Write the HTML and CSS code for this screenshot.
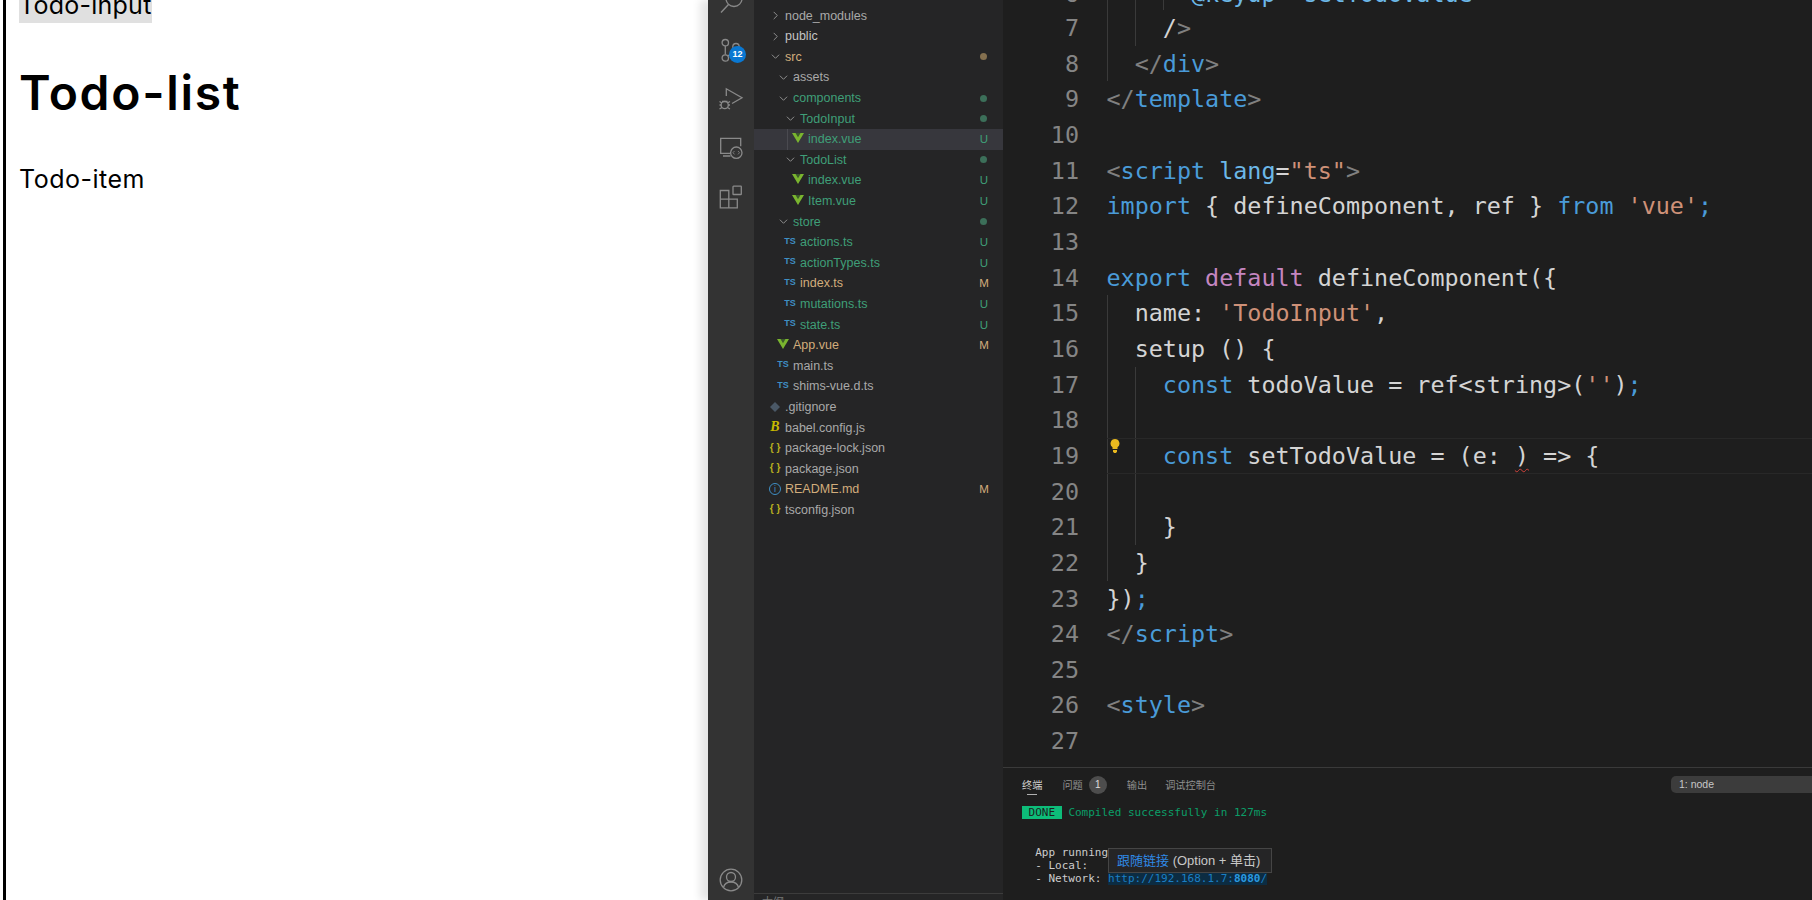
FILE: index.html
```html
<!DOCTYPE html>
<html>
<head>
  <title>Todo-list</title>
  <meta name="viewport" content="width=device-width, initial-scale=1.0">
  <link rel="stylesheet" href="styles.css">
</head>
<body>
  <section class="browser">
    <div class="todo-input"><span>Todo-input</span></div>
    <h1>Todo-list</h1>
    <p>Todo-item</p>
  </section>

  <nav class="activity">
    <div class="slot slot-search">
      <svg class="icon" viewBox="0 0 24 24"><circle cx="15" cy="14.5" r="8"/><path d="M9.5 20.5 2 28.5"/></svg>
    </div>
    <div class="slot">
      <svg class="icon" viewBox="0 0 24 24"><circle cx="6.3" cy="8.7" r="3.2"/><circle cx="6.3" cy="24" r="3.2"/><circle cx="17" cy="12.7" r="3.2"/><path d="M6.3 12v8.6M17 16c0 4-7.5 3-7.6 6"/></svg>
      <span class="badge">12</span>
    </div>
    <div class="slot">
      <svg class="icon" viewBox="0 0 24 24"><path d="M7.3 11V3.8L23 12.8 13 18.5"/><circle cx="5.7" cy="20" r="3.6"/><path d="M.5 16.5l2.5 1.5M.5 20h1.6M.5 24l2.5-1.5M11 16.5 8.500 18M11 20H9.300M11 24l-2.500-1.500M3 16.500h5.500"/></svg>
    </div>
    <div class="slot">
      <svg class="icon" viewBox="0 0 24 24"><path d="M11 18.300H1.700V3.300h20v8M4 21h7.500"/><circle cx="17.300" cy="17.700" r="5.700"/><path d="M15.500 16l-1.500 1.700 1.500 1.700M19 16l1.500 1.700L19 19.400" class="thin"/></svg>
    </div>
    <div class="slot">
      <svg class="icon" viewBox="0 0 24 24"><rect x="14" y=".2" width="8.300" height="8.300" rx=".6"/><path d="M1.300 4.500H9.800V21.800H1.300ZM1.300 13.200H18.300V21.800H9.800"/></svg>
    </div>
    <div class="slot slot-account">
      <svg class="icon" viewBox="0 0 24 24"><circle cx="12" cy="12" r="10.800"/><circle cx="12" cy="9" r="4.500"/><path d="M4.500 19.500c1-4 4-5.500 7.500-5.500s6.500 1.500 7.500 5.500"/></svg>
    </div>
  </nav>

  <aside class="sidebar">
    <div class="tree">
      <div class="row d0 plain"><span class="slot-ico"><svg class="chev" viewBox="0 0 10 10"><path d="M3 1l4 4-4 4"/></svg></span><span class="name">node_modules</span></div>
      <div class="row d0 plain bright"><span class="slot-ico"><svg class="chev" viewBox="0 0 10 10"><path d="M3 1l4 4-4 4"/></svg></span><span class="name">public</span></div>
      <div class="row d0 mod"><span class="slot-ico"><svg class="chev" viewBox="0 0 10 10"><path d="M1 3l4 4 4-4"/></svg></span><span class="name">src</span><span class="dot dot-mod"></span></div>
      <div class="row d1 plain"><span class="slot-ico"><svg class="chev" viewBox="0 0 10 10"><path d="M1 3l4 4 4-4"/></svg></span><span class="name">assets</span></div>
      <div class="row d1 new"><span class="slot-ico"><svg class="chev" viewBox="0 0 10 10"><path d="M1 3l4 4 4-4"/></svg></span><span class="name">components</span><span class="dot"></span></div>
      <div class="row d2 new"><span class="slot-ico"><svg class="chev" viewBox="0 0 10 10"><path d="M1 3l4 4 4-4"/></svg></span><span class="name">TodoInput</span><span class="dot"></span></div>
      <div class="row d3 new selected"><span class="slot-ico"><svg class="vue" viewBox="0 0 12 10"><path d="M0 0h12L6 10Z"/><path class="vue-in" d="M3.500 0h5L6 4.200Z"/></svg></span><span class="name">index.vue</span><span class="status">U</span></div>
      <div class="row d2 new"><span class="slot-ico"><svg class="chev" viewBox="0 0 10 10"><path d="M1 3l4 4 4-4"/></svg></span><span class="name">TodoList</span><span class="dot"></span></div>
      <div class="row d3 new"><span class="slot-ico"><svg class="vue" viewBox="0 0 12 10"><path d="M0 0h12L6 10Z"/><path class="vue-in" d="M3.500 0h5L6 4.200Z"/></svg></span><span class="name">index.vue</span><span class="status">U</span></div>
      <div class="row d3 new"><span class="slot-ico"><svg class="vue" viewBox="0 0 12 10"><path d="M0 0h12L6 10Z"/><path class="vue-in" d="M3.500 0h5L6 4.200Z"/></svg></span><span class="name">Item.vue</span><span class="status">U</span></div>
      <div class="row d1 new"><span class="slot-ico"><svg class="chev" viewBox="0 0 10 10"><path d="M1 3l4 4 4-4"/></svg></span><span class="name">store</span><span class="dot"></span></div>
      <div class="row d2 new"><span class="slot-ico ts">TS</span><span class="name">actions.ts</span><span class="status">U</span></div>
      <div class="row d2 new"><span class="slot-ico ts">TS</span><span class="name">actionTypes.ts</span><span class="status">U</span></div>
      <div class="row d2 mod"><span class="slot-ico ts">TS</span><span class="name">index.ts</span><span class="status">M</span></div>
      <div class="row d2 new"><span class="slot-ico ts">TS</span><span class="name">mutations.ts</span><span class="status">U</span></div>
      <div class="row d2 new"><span class="slot-ico ts">TS</span><span class="name">state.ts</span><span class="status">U</span></div>
      <div class="row d1 mod"><span class="slot-ico"><svg class="vue" viewBox="0 0 12 10"><path d="M0 0h12L6 10Z"/><path class="vue-in" d="M3.500 0h5L6 4.200Z"/></svg></span><span class="name">App.vue</span><span class="status">M</span></div>
      <div class="row d1 plain"><span class="slot-ico ts">TS</span><span class="name">main.ts</span></div>
      <div class="row d1 plain"><span class="slot-ico ts">TS</span><span class="name">shims-vue.d.ts</span></div>
      <div class="row d0 plain"><span class="slot-ico"><svg class="diamond" viewBox="0 0 10 10"><path d="M5 0l5 5-5 5-5-5Z"/></svg></span><span class="name">.gitignore</span></div>
      <div class="row d0 plain"><span class="slot-ico babel">B</span><span class="name">babel.config.js</span></div>
      <div class="row d0 plain"><span class="slot-ico json">{ }</span><span class="name">package-lock.json</span></div>
      <div class="row d0 plain"><span class="slot-ico json">{ }</span><span class="name">package.json</span></div>
      <div class="row d0 mod"><span class="slot-ico info">i</span><span class="name">README.md</span><span class="status">M</span></div>
      <div class="row d0 plain"><span class="slot-ico json">{ }</span><span class="name">tsconfig.json</span></div>
    </div>
    <div class="outline">大纲</div>
  </aside>

  <main class="workbench">
    <div class="editor">
      <div class="line"><span class="ln">6</span><span class="ind"></span><span class="ind"></span><span class="ind"></span><span class="tag">@keyup</span><span class="pun">=</span><span class="str">"</span><span class="tag">setTodoValue</span><span class="str">"</span></div>
      <div class="line"><span class="ln">7</span><span class="ind"></span><span class="ind"></span><span class="txt">/</span><span class="pun">&gt;</span></div>
      <div class="line"><span class="ln">8</span><span class="ind"></span><span class="pun">&lt;/</span><span class="kw">div</span><span class="pun">&gt;</span></div>
      <div class="line"><span class="ln">9</span><span class="pun">&lt;/</span><span class="kw">template</span><span class="pun">&gt;</span></div>
      <div class="line"><span class="ln">10</span></div>
      <div class="line"><span class="ln">11</span><span class="pun">&lt;</span><span class="kw">script </span><span class="tag">lang</span><span class="txt">=</span><span class="str">"ts"</span><span class="pun">&gt;</span></div>
      <div class="line"><span class="ln">12</span><span class="kw">import</span><span class="txt"> { defineComponent, ref } </span><span class="kw">from </span><span class="str">'vue'</span><span class="kw">;</span></div>
      <div class="line"><span class="ln">13</span></div>
      <div class="line"><span class="ln">14</span><span class="kw">export </span><span class="ctl">default</span><span class="txt"> defineComponent({</span></div>
      <div class="line"><span class="ln">15</span><span class="ind"></span><span class="txt">name: </span><span class="str">'TodoInput'</span><span class="txt">,</span></div>
      <div class="line"><span class="ln">16</span><span class="ind"></span><span class="txt">setup () {</span></div>
      <div class="line"><span class="ln">17</span><span class="ind"></span><span class="ind"></span><span class="kw">const</span><span class="txt"> todoValue = ref&lt;string&gt;(</span><span class="str">''</span><span class="txt">)</span><span class="kw">;</span></div>
      <div class="line"><span class="ln">18</span><span class="ind"></span><span class="ind"></span></div>
      <div class="line current"><span class="ln">19</span><span class="ind"></span><span class="ind"></span><span class="kw">const</span><span class="txt"> setTodoValue = (e: </span><span class="txt squiggle">)</span><span class="txt"> =&gt; {</span>
        <svg class="bulb" viewBox="0 0 10 14"><path d="M5 0a4.500 4.500 0 0 0-2.500 8.200V10h5V8.200A4.500 4.500 0 0 0 5 0Z"/><path d="M3 11h4v1.500L6 14H4l-1-1.500Z"/></svg>
      </div>
      <div class="line"><span class="ln">20</span><span class="ind"></span><span class="ind"></span></div>
      <div class="line"><span class="ln">21</span><span class="ind"></span><span class="ind"></span><span class="txt">}</span></div>
      <div class="line"><span class="ln">22</span><span class="ind"></span><span class="txt">}</span></div>
      <div class="line"><span class="ln">23</span><span class="txt">})</span><span class="kw">;</span></div>
      <div class="line"><span class="ln">24</span><span class="pun">&lt;/</span><span class="kw">script</span><span class="pun">&gt;</span></div>
      <div class="line"><span class="ln">25</span></div>
      <div class="line"><span class="ln">26</span><span class="pun">&lt;</span><span class="kw">style</span><span class="pun">&gt;</span></div>
      <div class="line"><span class="ln">27</span></div>
    </div>

    <div class="terminal">
      <div class="tabs">
        <span class="tab active">终端</span>
        <span class="tab">问题<span class="count">1</span></span>
        <span class="tab">输出</span>
        <span class="tab tab-debug">调试控制台</span>
        <span class="picker">1: node</span>
      </div>
      <div class="term-line"><span class="done"> DONE </span> <span class="ok">Compiled successfully in 127ms</span></div>
      <div class="term-line"></div>
      <div class="term-line"></div>
      <div class="term-line">  App running</div>
      <div class="term-line">  - Local:</div>
      <div class="term-line">  - Network: <span class="link">http://192.168.1.7:<b>8080</b>/</span></div>
      <div class="tooltip"><span class="tip-link">跟随链接</span> (Option + 单击)</div>
    </div>
  </main>
</body>
</html>
```

FILE: styles.css
```css
html, body {
  height: 100%;
  margin: 0;
  padding: 0;
  overflow: hidden;
}
body {
  display: flex;
  width: 1812px;
  height: 900px;
  background: #fff;
  font-family: "Liberation Sans", "Noto Sans CJK SC", sans-serif;
}

/* browser preview on the left */
.browser {
  width: 705px;
  margin-left: 3px;
  padding-left: 13px;
  box-sizing: border-box;
  border-left: 3px solid #000;
  background: #fff;
  color: #000;
  font-family: Inter, "Liberation Sans", sans-serif;
}
.todo-input {
  margin-top: -10px;
  font-size: 25px;
  line-height: 30px;
  letter-spacing: .25px;
}
.todo-input span {
  display: inline-block;
  padding-bottom: 3px;
  background: #e0e0e0;
}
.browser h1 {
  margin: 39.500px 0 0;
  font-size: 48px;
  line-height: 60px;
  font-weight: 600;
  letter-spacing: 1.700px;
}
.browser p {
  margin: 41.500px 0 0;
  font-size: 25px;
  line-height: 30px;
  letter-spacing: .5px;
}

/* activity bar */
.activity {
  position: relative;
  width: 46px;
  flex: none;
  display: flex;
  flex-direction: column;
  background: #333;
  box-shadow: -8px 0 8px rgba(0, 0, 0, .1);
}
.slot {
  position: relative;
  height: 50.5px;
  flex: none;
  display: flex;
  align-items: center;
  justify-content: center;
}
.slot-search {
  margin-top: -29.700px;
}
.slot-account {
  margin-top: auto;
  margin-bottom: -5px;
}
.icon {
  width: 24px;
  height: 24px;
  overflow: visible;
  fill: none;
  stroke: #8a8a8a;
  stroke-width: 1.300;
}
.activity .thin {
  stroke-width: .8;
}
.activity .icon circle {
  fill: #333;
}
.badge {
  position: absolute;
  left: 21px;
  top: 25px;
  width: 17px;
  height: 17px;
  border-radius: 50%;
  background: #0a78d2;
  color: #fff;
  font-size: 9px;
  font-weight: bold;
  line-height: 17px;
  text-align: center;
}

/* explorer */
.sidebar {
  width: 249px;
  flex: none;
  display: flex;
  flex-direction: column;
  background: #252526;
  font-size: 12.500px;
}
.tree {
  padding-top: 5.400px;
}
.row {
  display: flex;
  align-items: center;
  height: 20.600px;
}
.d0 { padding-left: 13px; }
.d1 { padding-left: 21px; }
.d2 { padding-left: 28px; }
.d3 { padding-left: 36px; }
.plain { color: #a9a9a9; }
.bright { color: #c4c4c4; }
.new { color: #3f9f78; }
.mod { color: #d2ad7c; }
.selected {
  background: linear-gradient(#4a4a50, #4a4a50) 33px 0 / 1px 100% no-repeat, #37373d;
}
.slot-ico {
  width: 16px;
  margin-right: 2px;
  flex: none;
  display: flex;
  align-items: center;
  justify-content: center;
}
.chev {
  width: 9px;
  height: 9px;
  fill: none;
  stroke: #9a9a9a;
  stroke-width: 1;
}
.vue {
  width: 12px;
  height: 10px;
  margin-top: -3px;
  fill: #7ab52f;
}
.vue .vue-in {
  fill: #3b5a2a;
}
.diamond {
  width: 10px;
  height: 10px;
  fill: #4a5866;
}
.ts {
  color: #3f8fc4;
  font-size: 9px;
  font-weight: bold;
  margin-top: -3px;
}
.babel {
  color: #c8b800;
  font-family: "Liberation Serif", serif;
  font-style: italic;
  font-weight: bold;
  font-size: 14px;
  margin-top: -1px;
}
.json {
  color: #b8b020;
  font-size: 10px;
  font-weight: bold;
  margin-top: -2px;
}
.info {
  box-sizing: border-box;
  width: 12px;
  height: 12px;
  margin: 0 4px 0 2px;
  border: 1px solid #3f8fc4;
  border-radius: 50%;
  color: #3f8fc4;
  font-size: 9px;
}
.status {
  width: 12px;
  margin: 0 13px 0 auto;
  text-align: center;
  font-size: 11.500px;
}
.dot {
  width: 7px;
  height: 7px;
  margin: 0 16.500px 0 auto;
  border-radius: 50%;
  background: #3c6f59;
}
.dot-mod {
  background: #84704f;
}
.outline {
  margin-top: auto;
  height: 6px;
  padding-left: 8px;
  overflow: hidden;
  border-top: 1px solid #3c3c3c;
  color: #777;
  font-size: 11px;
  line-height: 16px;
}

/* editor */
.workbench {
  width: 809px;
  flex: none;
  display: flex;
  flex-direction: column;
  background: #1e1e1e;
}
.editor {
  height: 767px;
  flex: none;
  overflow: hidden;
  font-family: "DejaVu Sans Mono", monospace;
  font-size: 23.400px;
  color: #d4d4d4;
}
.line {
  position: relative;
  display: flex;
  height: 35.670px;
  line-height: 37.670px;
  white-space: pre;
  box-sizing: border-box;
}
.line:first-child {
  margin-top: -25.670px;
  line-height: 41px;
}
.ln {
  width: 76px;
  margin-right: 27.500px;
  flex: none;
  text-align: right;
  color: #858585;
}
.ind {
  width: 28.160px;
  height: 100%;
  flex: none;
  box-sizing: border-box;
  border-left: 1px solid #3a3a3a;
}
.kw { color: #4a9bd8; }
.tag { color: #6cb8e8; }
.pun { color: #808080; }
.txt { color: #d4d4d4; }
.str { color: #ce9178; }
.ctl { color: #c586c0; }
.current::after {
  content: "";
  position: absolute;
  left: 103.500px;
  right: 0;
  top: 0;
  bottom: 0;
  border-top: 1px solid #282828;
  border-bottom: 1px solid #282828;
}
.squiggle {
  text-decoration: underline wavy #d0413a 1px;
  text-underline-offset: 4px;
}
.bulb {
  position: absolute;
  left: 107px;
  top: 1px;
  width: 10px;
  height: 14px;
  fill: #e8b81f;
}

/* terminal */
.terminal {
  position: relative;
  flex: 1;
  padding-left: 19px;
  border-top: 1px solid #3a3a3a;
  font-family: "DejaVu Sans Mono", monospace;
  font-size: 11px;
  color: #cccccc;
}
.tabs {
  display: flex;
  align-items: center;
  gap: 20px;
  height: 38px;
  padding-bottom: 5px;
  box-sizing: border-box;
  font-family: "Liberation Sans", "Noto Sans CJK SC", sans-serif;
  font-size: 10.200px;
  color: #8f8f8f;
}
.tab {
  display: flex;
  align-items: center;
  height: 18px;
}
.tab.active {
  color: #d0d0d0;
  box-shadow: 0 6px 0 -5px #b0b0b0;
}
.tab-debug {
  margin-left: -2px;
}
.count {
  width: 18px;
  height: 18px;
  margin-left: 6px;
  border-radius: 50%;
  background: #4d4d4d;
  color: #ddd;
  font-size: 10px;
  line-height: 18px;
  text-align: center;
}
.picker {
  width: 145px;
  height: 17px;
  margin-left: auto;
  margin-right: -4px;
  padding-left: 8px;
  box-sizing: border-box;
  border-radius: 5px;
  background: #3c3c3c;
  color: #c8c8c8;
  font-size: 10.500px;
  line-height: 17px;
}
.term-line {
  height: 13.300px;
  line-height: 13.300px;
  white-space: pre;
}
.done {
  background: #0dbc79;
  color: #1e1e1e;
}
.ok {
  color: #0b9e68;
}
.link {
  background: #0c2c42;
  color: #1b7fc4;
}
.link b {
  color: #2a9ae0;
}
.tooltip {
  position: absolute;
  left: 105px;
  top: 80px;
  width: 164px;
  height: 25px;
  box-sizing: border-box;
  padding-left: 8px;
  border: 1px solid #454545;
  background: #252526;
  color: #c8c8c8;
  font-family: "Liberation Sans", "Noto Sans CJK SC", sans-serif;
  font-size: 13px;
  line-height: 23px;
  white-space: nowrap;
}
.tip-link {
  color: #2f8ae8;
}
```
